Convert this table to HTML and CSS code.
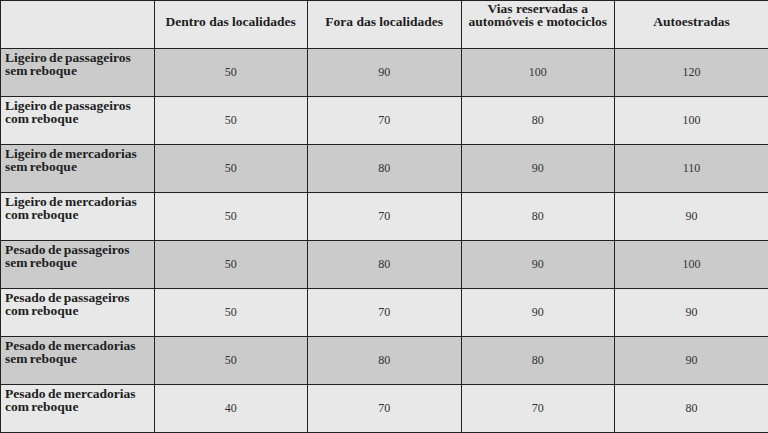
FILE: index.html
```html
<!DOCTYPE html>
<html lang="pt">
<head>
<meta charset="utf-8">
<title>Limites de velocidade</title>
<link rel="stylesheet" href="styles.css">
</head>
<body>
<table class="speed">
  <thead>
    <tr>
      <th class="corner"></th>
      <th>Dentro das localidades</th>
      <th>Fora das localidades</th>
      <th>Vias reservadas a automóveis e motociclos</th>
      <th>Autoestradas</th>
    </tr>
  </thead>
  <tbody>
    <tr class="dark"><th>Ligeiro de passageiros sem reboque</th><td>50</td><td>90</td><td>100</td><td>120</td></tr>
    <tr class="light"><th>Ligeiro de passageiros com reboque</th><td>50</td><td>70</td><td>80</td><td>100</td></tr>
    <tr class="dark"><th>Ligeiro de mercadorias sem reboque</th><td>50</td><td>80</td><td>90</td><td>110</td></tr>
    <tr class="light"><th>Ligeiro de mercadorias com reboque</th><td>50</td><td>70</td><td>80</td><td>90</td></tr>
    <tr class="dark"><th>Pesado de passageiros sem reboque</th><td>50</td><td>80</td><td>90</td><td>100</td></tr>
    <tr class="light"><th>Pesado de passageiros com reboque</th><td>50</td><td>70</td><td>90</td><td>90</td></tr>
    <tr class="dark"><th>Pesado de mercadorias sem reboque</th><td>50</td><td>80</td><td>80</td><td>90</td></tr>
    <tr class="light"><th>Pesado de mercadorias com reboque</th><td>40</td><td>70</td><td>70</td><td>80</td></tr>
  </tbody>
</table>
</body>
</html>
```
FILE: styles.css
```css
html, body {
  margin: 0;
  padding: 0;
  background: #ffffff;
  overflow: hidden;
}

.speed {
  width: 768px;
  table-layout: fixed;
  border-collapse: collapse;
  font-family: "Liberation Serif", "DejaVu Serif", serif;
  font-size: 13.5px;
  line-height: 13px;
  color: #1e1e1e;
}

.speed th,
.speed td {
  border: 1px solid #222222;
  height: 48px;
  padding: 0;
  box-sizing: border-box;
}

.speed tr > :last-child {
  border-right: 0;
}

.speed thead th {
  background: #e8e8e8;
  font-weight: bold;
  text-align: center;
  vertical-align: bottom;
  padding: 0 4px 20px;
}

.speed tbody th {
  font-weight: bold;
  text-align: left;
  vertical-align: top;
  padding: 2px 2px 0 4px;
  word-spacing: -1px;
}

.speed tbody td {
  text-align: center;
  vertical-align: middle;
  font-size: 12px;
  color: #333333;
  font-variant-numeric: oldstyle-nums;
}

.speed .dark th,
.speed .dark td {
  background: #cbcbcb;
}

.speed .light th,
.speed .light td {
  background: #e8e8e8;
}
```
